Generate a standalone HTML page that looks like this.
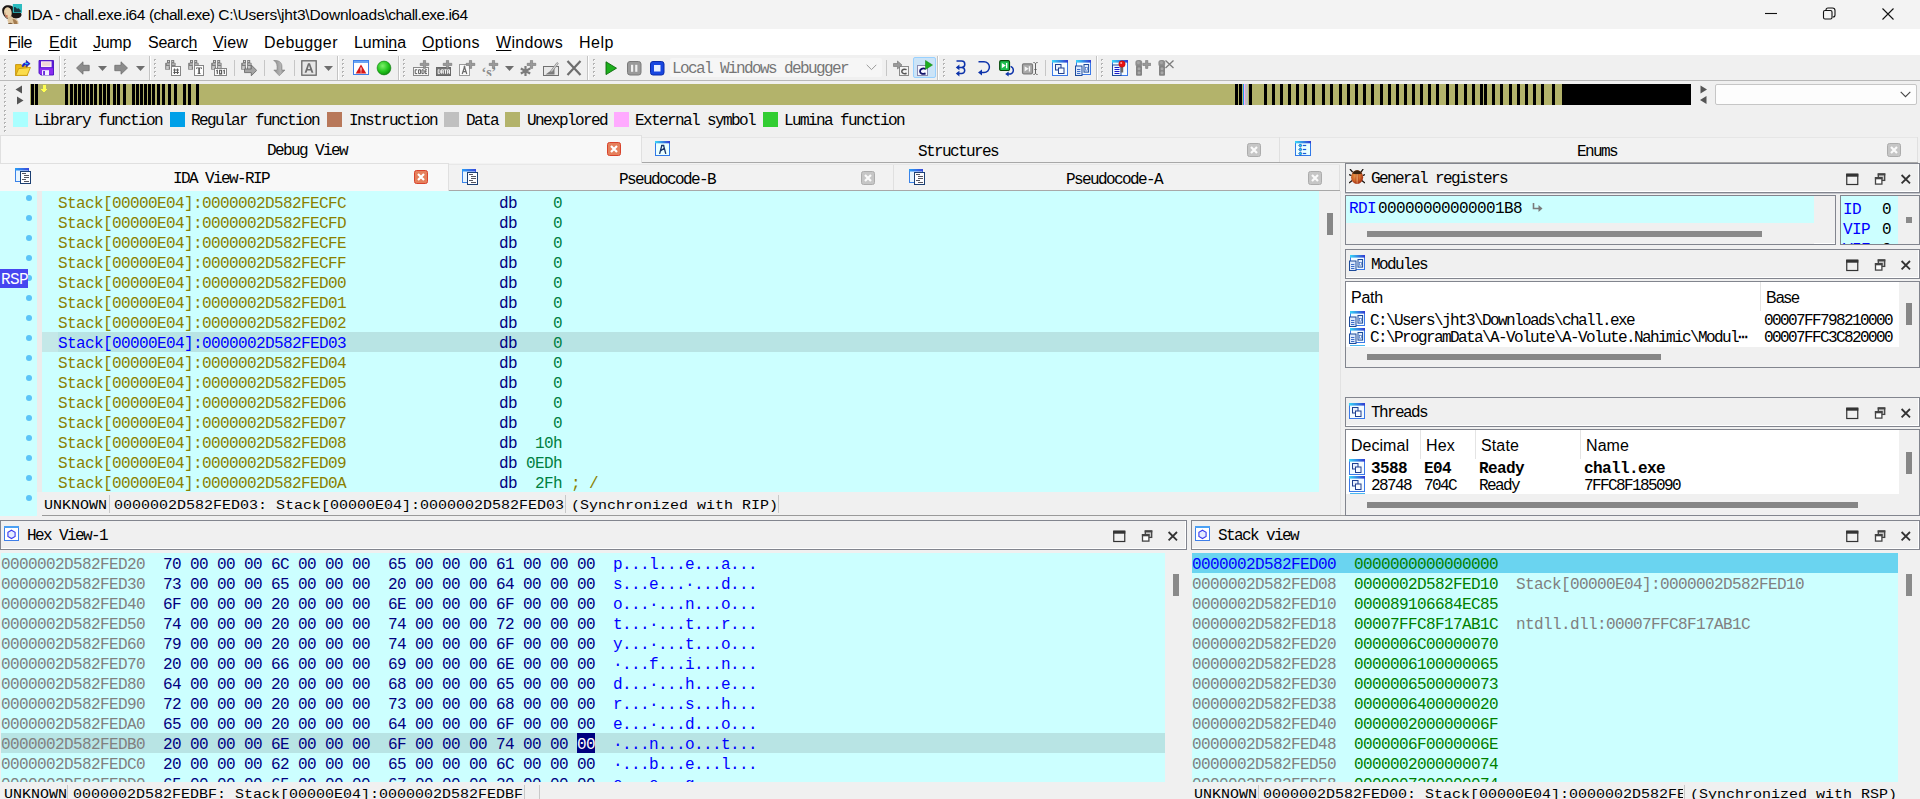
<!DOCTYPE html>
<html><head><meta charset="utf-8"><title>IDA</title>
<style>
html,body{margin:0;padding:0;background:#f0f0f0;}
#r{position:relative;width:1920px;height:799px;overflow:hidden;background:#f0f0f0;}
#r div,#r svg{position:absolute;white-space:pre;}
u{text-decoration-thickness:1px;text-underline-offset:2px;}
.ui8{font-family:'Liberation Mono',monospace;font-size:16px;letter-spacing:-1.6px;line-height:16px;}
.ui8b{font-family:'Liberation Mono',monospace;font-size:16px;letter-spacing:-0.6px;line-height:16px;font-weight:bold;}
.c9{font-family:'Liberation Mono',monospace;font-size:16px;letter-spacing:-0.6px;line-height:20px;}
.st9{font-family:'Liberation Mono',monospace;font-size:12.5px;line-height:16px;transform:scaleX(1.1998);transform-origin:0 0;}
.title{font-family:'Liberation Sans',sans-serif;font-size:15.5px;line-height:18px;}
.menu{font-family:'Liberation Sans',sans-serif;font-size:16px;line-height:18px;}
.hdr{font-family:'Liberation Sans',sans-serif;font-size:16px;line-height:18px;}
</style></head>
<body><div id="r">
<div style="left:0px;top:0px;width:1920px;height:29px;background:#f3f3f3;"></div>
<div style="left:0px;top:29px;width:1920px;height:26px;background:#ffffff;"></div>
<div style="left:0px;top:55px;width:1920px;height:744px;background:#f0f0f0;"></div>
<svg style="left:0px;top:0px" width="26" height="28" viewBox="0 0 26 28">
<path d="M2.200 10.500c0-3.500 3-5.500 6.500-5.200 2.500 .2 4.500 1 5.500 3l5 3c2.500 1.500 3 4 1.500 5.500-1 1.300-3 1.700-5 1.700l-4.500-.5-4 1c-3-2-5-5-5-8.500z" fill="#1b1614"/>
<ellipse cx="7.900" cy="12.600" rx="3.800" ry="5.400" fill="#ead2ac" transform="rotate(-10 7.900 12.600)"/>
<path d="M4.600 12.500c0 3 1 5 2.600 6l1.600-.5c-2-1-3.200-3-3.200-5.500z" fill="#c89a78"/>
<path d="M5.600 15.600q1 .8 2 .2" stroke="#b8402a" stroke-width="1.100" fill="none"/>
<path d="M7.800 17.800l3.700-1.600 2 1.800 3 1 1.800 2.500 .2 2.500h-9.700l-1.300-3.500z" fill="#dfc6a0"/>
<path d="M12.500 19l2.500 .6 2 2 .5 2.400h-3.500z" fill="#a47c50"/>
<path d="M8 23.200l2.500-.5 2 .7v.6h-4.200z" fill="#7a5a3a"/>
<rect x="12.800" y="4" width="9.200" height="8.800" fill="#2cbcc0"/><path d="M14 12v-5l1.600 .2 1.400 1.600 1.500-.6 2.300 2.300v1.500z" fill="#193a42"/>
</svg>
<div class="title" style="left:27.5px;top:5.5px;color:#000;letter-spacing:-0.387px;">IDA - chall.exe.i64 </div>
<div class="title" style="left:149px;top:5.5px;color:#000;letter-spacing:-0.551px;">(chall.exe) </div>
<div class="title" style="left:218.2px;top:5.5px;color:#000;letter-spacing:-0.186px;">C:\Users\jht3\Downloads</div>
<div class="title" style="left:384.5px;top:5.5px;color:#000;letter-spacing:-0.535px;">\chall.exe.i64</div>
<svg style="left:1760px;top:4px" width="140" height="22" viewBox="0 0 140 22" fill="none" stroke="#111" stroke-width="1.1"><path d="M5 9.5h12"/><rect x="63.5" y="6.5" width="8.5" height="8.5" rx="1.5"/><path d="M66 6.3 v-0.3 a2 2 0 0 1 2 -2 h4.5 a2.5 2.5 0 0 1 2.5 2.5 v4.5 a2 2 0 0 1 -2 2 h-0.3"/><path d="M122.5 4.5l11 11M133.5 4.5l-11 11"/></svg>
<div class="menu" style="left:8px;top:34px;color:#000;letter-spacing:-0.445px;"><u>F</u>ile</div>
<div class="menu" style="left:49px;top:34px;color:#000;letter-spacing:0.105px;"><u>E</u>dit</div>
<div class="menu" style="left:93px;top:34px;color:#000;letter-spacing:-0.281px;"><u>J</u>ump</div>
<div class="menu" style="left:148px;top:34px;color:#000;letter-spacing:-0.284px;">Searc<u>h</u></div>
<div class="menu" style="left:213px;top:34px;color:#000;letter-spacing:0.152px;"><u>V</u>iew</div>
<div class="menu" style="left:264px;top:34px;color:#000;letter-spacing:0.465px;">Deb<u>u</u>gger</div>
<div class="menu" style="left:354px;top:34px;color:#000;letter-spacing:-0.081px;">Lumi<u>n</u>a</div>
<div class="menu" style="left:422px;top:34px;color:#000;letter-spacing:0.408px;"><u>O</u>ptions</div>
<div class="menu" style="left:496px;top:34px;color:#000;letter-spacing:0.299px;"><u>W</u>indows</div>
<div class="menu" style="left:579px;top:34px;color:#000;letter-spacing:0.523px;">Help</div>
<div style="left:0px;top:80px;width:1920px;height:1px;background:#b9b9b9;"></div>
<div style="left:4px;top:59px;width:2px;height:2px;background:#b4b4b4;"></div>
<div style="left:5px;top:60px;width:1px;height:1px;background:#ffffff;"></div>
<div style="left:4px;top:63px;width:2px;height:2px;background:#b4b4b4;"></div>
<div style="left:5px;top:64px;width:1px;height:1px;background:#ffffff;"></div>
<div style="left:4px;top:67px;width:2px;height:2px;background:#b4b4b4;"></div>
<div style="left:5px;top:68px;width:1px;height:1px;background:#ffffff;"></div>
<div style="left:4px;top:71px;width:2px;height:2px;background:#b4b4b4;"></div>
<div style="left:5px;top:72px;width:1px;height:1px;background:#ffffff;"></div>
<div style="left:4px;top:75px;width:2px;height:2px;background:#b4b4b4;"></div>
<div style="left:5px;top:76px;width:1px;height:1px;background:#ffffff;"></div>
<div style="left:64px;top:59px;width:2px;height:2px;background:#b4b4b4;"></div>
<div style="left:65px;top:60px;width:1px;height:1px;background:#ffffff;"></div>
<div style="left:64px;top:63px;width:2px;height:2px;background:#b4b4b4;"></div>
<div style="left:65px;top:64px;width:1px;height:1px;background:#ffffff;"></div>
<div style="left:64px;top:67px;width:2px;height:2px;background:#b4b4b4;"></div>
<div style="left:65px;top:68px;width:1px;height:1px;background:#ffffff;"></div>
<div style="left:64px;top:71px;width:2px;height:2px;background:#b4b4b4;"></div>
<div style="left:65px;top:72px;width:1px;height:1px;background:#ffffff;"></div>
<div style="left:64px;top:75px;width:2px;height:2px;background:#b4b4b4;"></div>
<div style="left:65px;top:76px;width:1px;height:1px;background:#ffffff;"></div>
<div style="left:154px;top:59px;width:2px;height:2px;background:#b4b4b4;"></div>
<div style="left:155px;top:60px;width:1px;height:1px;background:#ffffff;"></div>
<div style="left:154px;top:63px;width:2px;height:2px;background:#b4b4b4;"></div>
<div style="left:155px;top:64px;width:1px;height:1px;background:#ffffff;"></div>
<div style="left:154px;top:67px;width:2px;height:2px;background:#b4b4b4;"></div>
<div style="left:155px;top:68px;width:1px;height:1px;background:#ffffff;"></div>
<div style="left:154px;top:71px;width:2px;height:2px;background:#b4b4b4;"></div>
<div style="left:155px;top:72px;width:1px;height:1px;background:#ffffff;"></div>
<div style="left:154px;top:75px;width:2px;height:2px;background:#b4b4b4;"></div>
<div style="left:155px;top:76px;width:1px;height:1px;background:#ffffff;"></div>
<div style="left:342px;top:59px;width:2px;height:2px;background:#b4b4b4;"></div>
<div style="left:343px;top:60px;width:1px;height:1px;background:#ffffff;"></div>
<div style="left:342px;top:63px;width:2px;height:2px;background:#b4b4b4;"></div>
<div style="left:343px;top:64px;width:1px;height:1px;background:#ffffff;"></div>
<div style="left:342px;top:67px;width:2px;height:2px;background:#b4b4b4;"></div>
<div style="left:343px;top:68px;width:1px;height:1px;background:#ffffff;"></div>
<div style="left:342px;top:71px;width:2px;height:2px;background:#b4b4b4;"></div>
<div style="left:343px;top:72px;width:1px;height:1px;background:#ffffff;"></div>
<div style="left:342px;top:75px;width:2px;height:2px;background:#b4b4b4;"></div>
<div style="left:343px;top:76px;width:1px;height:1px;background:#ffffff;"></div>
<div style="left:403px;top:59px;width:2px;height:2px;background:#b4b4b4;"></div>
<div style="left:404px;top:60px;width:1px;height:1px;background:#ffffff;"></div>
<div style="left:403px;top:63px;width:2px;height:2px;background:#b4b4b4;"></div>
<div style="left:404px;top:64px;width:1px;height:1px;background:#ffffff;"></div>
<div style="left:403px;top:67px;width:2px;height:2px;background:#b4b4b4;"></div>
<div style="left:404px;top:68px;width:1px;height:1px;background:#ffffff;"></div>
<div style="left:403px;top:71px;width:2px;height:2px;background:#b4b4b4;"></div>
<div style="left:404px;top:72px;width:1px;height:1px;background:#ffffff;"></div>
<div style="left:403px;top:75px;width:2px;height:2px;background:#b4b4b4;"></div>
<div style="left:404px;top:76px;width:1px;height:1px;background:#ffffff;"></div>
<div style="left:593px;top:59px;width:2px;height:2px;background:#b4b4b4;"></div>
<div style="left:594px;top:60px;width:1px;height:1px;background:#ffffff;"></div>
<div style="left:593px;top:63px;width:2px;height:2px;background:#b4b4b4;"></div>
<div style="left:594px;top:64px;width:1px;height:1px;background:#ffffff;"></div>
<div style="left:593px;top:67px;width:2px;height:2px;background:#b4b4b4;"></div>
<div style="left:594px;top:68px;width:1px;height:1px;background:#ffffff;"></div>
<div style="left:593px;top:71px;width:2px;height:2px;background:#b4b4b4;"></div>
<div style="left:594px;top:72px;width:1px;height:1px;background:#ffffff;"></div>
<div style="left:593px;top:75px;width:2px;height:2px;background:#b4b4b4;"></div>
<div style="left:594px;top:76px;width:1px;height:1px;background:#ffffff;"></div>
<div style="left:943px;top:59px;width:2px;height:2px;background:#b4b4b4;"></div>
<div style="left:944px;top:60px;width:1px;height:1px;background:#ffffff;"></div>
<div style="left:943px;top:63px;width:2px;height:2px;background:#b4b4b4;"></div>
<div style="left:944px;top:64px;width:1px;height:1px;background:#ffffff;"></div>
<div style="left:943px;top:67px;width:2px;height:2px;background:#b4b4b4;"></div>
<div style="left:944px;top:68px;width:1px;height:1px;background:#ffffff;"></div>
<div style="left:943px;top:71px;width:2px;height:2px;background:#b4b4b4;"></div>
<div style="left:944px;top:72px;width:1px;height:1px;background:#ffffff;"></div>
<div style="left:943px;top:75px;width:2px;height:2px;background:#b4b4b4;"></div>
<div style="left:944px;top:76px;width:1px;height:1px;background:#ffffff;"></div>
<div style="left:1101px;top:59px;width:2px;height:2px;background:#b4b4b4;"></div>
<div style="left:1102px;top:60px;width:1px;height:1px;background:#ffffff;"></div>
<div style="left:1101px;top:63px;width:2px;height:2px;background:#b4b4b4;"></div>
<div style="left:1102px;top:64px;width:1px;height:1px;background:#ffffff;"></div>
<div style="left:1101px;top:67px;width:2px;height:2px;background:#b4b4b4;"></div>
<div style="left:1102px;top:68px;width:1px;height:1px;background:#ffffff;"></div>
<div style="left:1101px;top:71px;width:2px;height:2px;background:#b4b4b4;"></div>
<div style="left:1102px;top:72px;width:1px;height:1px;background:#ffffff;"></div>
<div style="left:1101px;top:75px;width:2px;height:2px;background:#b4b4b4;"></div>
<div style="left:1102px;top:76px;width:1px;height:1px;background:#ffffff;"></div>
<div style="left:59px;top:56px;width:1px;height:24px;background:#c4c4c4;"></div>
<div style="left:60px;top:56px;width:1px;height:24px;background:#ffffff;"></div>
<div style="left:149px;top:56px;width:1px;height:24px;background:#c4c4c4;"></div>
<div style="left:150px;top:56px;width:1px;height:24px;background:#ffffff;"></div>
<div style="left:337px;top:56px;width:1px;height:24px;background:#c4c4c4;"></div>
<div style="left:338px;top:56px;width:1px;height:24px;background:#ffffff;"></div>
<div style="left:398px;top:56px;width:1px;height:24px;background:#c4c4c4;"></div>
<div style="left:399px;top:56px;width:1px;height:24px;background:#ffffff;"></div>
<div style="left:587px;top:56px;width:1px;height:24px;background:#c4c4c4;"></div>
<div style="left:588px;top:56px;width:1px;height:24px;background:#ffffff;"></div>
<div style="left:937px;top:56px;width:1px;height:24px;background:#c4c4c4;"></div>
<div style="left:938px;top:56px;width:1px;height:24px;background:#ffffff;"></div>
<div style="left:1096px;top:56px;width:1px;height:24px;background:#c4c4c4;"></div>
<div style="left:1097px;top:56px;width:1px;height:24px;background:#ffffff;"></div>
<div style="left:234px;top:60px;width:1px;height:16px;background:#c6c6c6;"></div>
<div style="left:264px;top:60px;width:1px;height:16px;background:#c6c6c6;"></div>
<div style="left:294px;top:60px;width:1px;height:16px;background:#c6c6c6;"></div>
<div style="left:886px;top:60px;width:1px;height:16px;background:#c6c6c6;"></div>
<div style="left:1045px;top:60px;width:1px;height:16px;background:#c6c6c6;"></div>
<svg style="left:15px;top:60px" width="16" height="16" viewBox="0 0 16 16"><path d="M.600 4.600h5.600l1 1.400h5v9.600H.600z" fill="#eebc18" stroke="#c49208" stroke-width=".900"/><path d="M3.600 8.600l11.800-1.200-3.200 8H.800z" fill="#fbdc4c" stroke="#c89a10" stroke-width=".900"/><path d="M7 6.600c.2-2.600 1.600-3.800 4.200-3.900V.300l4 3.400-4 3.400V4.900c-1.600 0-2.500.600-3 1.800z" fill="#1a22d8" stroke="#1010a8" stroke-width=".400"/><path d="M10 3.700h3.200" stroke="#30e0f8" stroke-width="1"/></svg>
<svg style="left:38px;top:60px" width="16" height="16" viewBox="0 0 16 16"><path d="M1 .500h14.500v14.500H2.800L1 13.200z" fill="#8a2cf0" stroke="#4610c0" stroke-width=".900"/><rect x="1.500" y="1" width="13.500" height="7.200" fill="#5a18d8"/><rect x="3" y="1.300" width="10.600" height="5.800" fill="#fbeef0"/><rect x="4.200" y="2.200" width="8.200" height="3.600" fill="#f0d4d8"/><rect x="4" y="10.200" width="7" height="5" fill="#f4f2ff"/><rect x="5.200" y="11" width="1.700" height="4" fill="#5a18d8"/></svg>
<svg style="left:76px;top:61px" width="14" height="14" viewBox="0 0 14 14"><path d="M0.5 7L7 0.8V4.3h6.2v5.4H7v3.5z" fill="#8c8c8c" stroke="#6e6e6e" stroke-width=".8"/></svg>
<svg style="left:98px;top:66px" width="9" height="5" viewBox="0 0 9 5"><path d="M0 0h9l-4.5 5z" fill="#6e6e6e"/></svg>
<svg style="left:114px;top:61px" width="14" height="14" viewBox="0 0 14 14"><path d="M13.5 7L7 0.8V4.3H0.8v5.4H7v3.5z" fill="#8c8c8c" stroke="#6e6e6e" stroke-width=".8"/></svg>
<svg style="left:136px;top:66px" width="9" height="5" viewBox="0 0 9 5"><path d="M0 0h9l-4.5 5z" fill="#6e6e6e"/></svg>
<svg style="left:165px;top:60px" width="16" height="16" viewBox="0 0 16 16"><rect x="2" y="0" width="3" height="3.200" fill="#7c7c7c"/><rect x="6.200" y="0" width="3" height="3.200" fill="#7c7c7c"/><rect x="3" y=".900" width="1" height="1.200" fill="#d8d8d8"/><rect x="7.200" y=".900" width="1" height="1.200" fill="#d8d8d8"/><rect x=".200" y="2.800" width="4.800" height="7" rx=".600" fill="#7e7e7e"/><rect x="6" y="2.800" width="4.600" height="7" rx=".600" fill="#7e7e7e"/><rect x="1.800" y="3.600" width="3" height="1" fill="#d4d4d4"/><rect x="6.800" y="3.600" width="3" height="1" fill="#d4d4d4"/><rect x="1.200" y="6" width="2.600" height="3.200" fill="#c8c8c8"/><rect x="7" y="6" width="2.600" height="3.200" fill="#c8c8c8"/><rect x="4.800" y="5.500" width="1.400" height="1.400" fill="#f4f4f4"/><rect x="6.500" y="6.500" width="9" height="9" fill="#fdfdfd" stroke="#858585"/><path d="M9.500 8.500v5.500M12.500 8.500v5.500M8.300 10h5.600M8.300 12.500h5.600" stroke="#5a5a5a" stroke-width="1.100" fill="none"/></svg>
<svg style="left:188px;top:60px" width="16" height="16" viewBox="0 0 16 16"><rect x="2" y="0" width="3" height="3.200" fill="#7c7c7c"/><rect x="6.200" y="0" width="3" height="3.200" fill="#7c7c7c"/><rect x="3" y=".900" width="1" height="1.200" fill="#d8d8d8"/><rect x="7.200" y=".900" width="1" height="1.200" fill="#d8d8d8"/><rect x=".200" y="2.800" width="4.800" height="7" rx=".600" fill="#7e7e7e"/><rect x="6" y="2.800" width="4.600" height="7" rx=".600" fill="#7e7e7e"/><rect x="1.800" y="3.600" width="3" height="1" fill="#d4d4d4"/><rect x="6.800" y="3.600" width="3" height="1" fill="#d4d4d4"/><rect x="1.200" y="6" width="2.600" height="3.200" fill="#c8c8c8"/><rect x="7" y="6" width="2.600" height="3.200" fill="#c8c8c8"/><rect x="4.800" y="5.500" width="1.400" height="1.400" fill="#f4f4f4"/><rect x="6.500" y="5.500" width="9" height="10" fill="#fdfdfd" stroke="#858585"/><path d="M8.200 7.500h5.800v1.500h-.6l-.3-.7h-1.200v5l.8.300v.500h-3.200v-.500l.8-.300v-5h-1.200l-.3.700h-.6z" fill="#555"/></svg>
<svg style="left:211px;top:60px" width="16" height="16" viewBox="0 0 16 16"><rect x="2" y="0" width="3" height="3.200" fill="#7c7c7c"/><rect x="6.200" y="0" width="3" height="3.200" fill="#7c7c7c"/><rect x="3" y=".900" width="1" height="1.200" fill="#d8d8d8"/><rect x="7.200" y=".900" width="1" height="1.200" fill="#d8d8d8"/><rect x=".200" y="2.800" width="4.800" height="7" rx=".600" fill="#7e7e7e"/><rect x="6" y="2.800" width="4.600" height="7" rx=".600" fill="#7e7e7e"/><rect x="1.800" y="3.600" width="3" height="1" fill="#d4d4d4"/><rect x="6.800" y="3.600" width="3" height="1" fill="#d4d4d4"/><rect x="1.200" y="6" width="2.600" height="3.200" fill="#c8c8c8"/><rect x="7" y="6" width="2.600" height="3.200" fill="#c8c8c8"/><rect x="4.800" y="5.500" width="1.400" height="1.400" fill="#f4f4f4"/><rect x="3.500" y="8.500" width="12" height="7" fill="#fdfdfd" stroke="#858585"/><path d="M5.300 10.800l1-.5v3.700M8.600 10.300h2v3.600h-2zM12.300 10.800l1-.5v3.700" stroke="#555" stroke-width="1.100" fill="none"/></svg>
<svg style="left:241px;top:60px" width="16" height="16" viewBox="0 0 16 16"><rect x="2" y="0" width="3" height="3.200" fill="#7c7c7c"/><rect x="6.200" y="0" width="3" height="3.200" fill="#7c7c7c"/><rect x="3" y=".900" width="1" height="1.200" fill="#d8d8d8"/><rect x="7.200" y=".900" width="1" height="1.200" fill="#d8d8d8"/><rect x=".200" y="2.800" width="4.800" height="7" rx=".600" fill="#7e7e7e"/><rect x="6" y="2.800" width="4.600" height="7" rx=".600" fill="#7e7e7e"/><rect x="1.800" y="3.600" width="3" height="1" fill="#d4d4d4"/><rect x="6.800" y="3.600" width="3" height="1" fill="#d4d4d4"/><rect x="1.200" y="6" width="2.600" height="3.200" fill="#c8c8c8"/><rect x="7" y="6" width="2.600" height="3.200" fill="#c8c8c8"/><rect x="4.800" y="5.500" width="1.400" height="1.400" fill="#f4f4f4"/><path d="M3.500 9h6.800V5l5.400 5.400-5.400 5.400v-3.200H3.500z" fill="#a4a4a4" stroke="#6c6c6c" stroke-width=".900"/></svg>
<svg style="left:272px;top:60px" width="14" height="16" viewBox="0 0 14 16"><defs><linearGradient id="dg" x1="0" x2="1"><stop offset="0" stop-color="#8a8a8a"/><stop offset=".6" stop-color="#b4b4b4"/><stop offset="1" stop-color="#808080"/></linearGradient></defs><path d="M1.500 .200c4.500 0 8.500 1.500 8.500 6.300v3.500h3l-5.700 5.800L1.800 10h3.200V6.500c0-3-1.500-5-3.500-6.300z" fill="url(#dg)" stroke="#787878" stroke-width=".500"/></svg>
<svg style="left:301px;top:60px" width="16" height="16" viewBox="0 0 16 16"><rect x=".8" y=".8" width="14.4" height="14.4" fill="#e6e6e6" stroke="#666" stroke-width="1.300"/><path d="M3.6 12.8L7 3.2h2l3.4 9.6h-1.9l-.8-2.4H6.3l-.8 2.4zM6.8 8.9h2.4L8 5.2z" fill="#6e6e6e"/></svg>
<svg style="left:324px;top:66px" width="9" height="5" viewBox="0 0 9 5"><path d="M0 0h9l-4.5 5z" fill="#6e6e6e"/></svg>
<svg style="left:353px;top:60px" width="16" height="16" viewBox="0 0 16 16"><rect x=".5" y=".5" width="15" height="14" fill="#fff" stroke="#3f7fe8"/><rect x="1" y="1" width="14" height="2" fill="#6aa6f4"/><path d="M8 4.5l5.3 9H2.7z" fill="#d81818"/><path d="M7.5 7.5h1v3.3h-1zM7.5 11.5h1v1h-1z" fill="#fff"/></svg>
<svg style="left:376px;top:60px" width="16" height="16" viewBox="0 0 16 16"><defs><radialGradient id="gg" cx=".4" cy=".35" r=".7"><stop offset="0" stop-color="#7df06a"/><stop offset=".6" stop-color="#22c41c"/><stop offset="1" stop-color="#0c8a0c"/></radialGradient></defs><circle cx="8" cy="8" r="6.900" fill="url(#gg)" stroke="#0a7a0a" stroke-width=".6"/></svg>
<svg style="left:413px;top:60px" width="17" height="16" viewBox="0 0 17 16"><rect x=".5" y="7.500" width="15" height="8" fill="#fafafa" stroke="#8a8a8a"/><path d="M4.200 9.800H2.200v3.800h2M5.600 9.800h2v3.800h-2zM9 9.800v3.800h1.200l.8-.8v-2.200l-.8-.8zM14 9.800h-1.900v3.800H14M12.100 11.700h1.500" stroke="#5c5c5c" stroke-width="1" fill="none"/><path d="M10.400 .400h2.200v2.900h3.200v2.200h-3.200v2.900h-2.200V5.500H7.200V3.300h3.200z" fill="#9a9a9a" stroke="#747474" stroke-width=".600"/></svg>
<svg style="left:436px;top:60px" width="17" height="16" viewBox="0 0 17 16"><rect x=".5" y="7.500" width="14" height="8" fill="#747474" stroke="#686868"/><path d="M2.200 9.800v3.800h1.200l.8-.8v-2.200l-.8-.8zM5.400 13.800v-4h1.900v4M5.400 12h1.900M8.300 9.800h2.400M9.500 9.800v4M11.600 13.800v-4h1.900v4M11.600 12h1.900" stroke="#f4f4f4" stroke-width="1" fill="none"/><path d="M10.400 .400h2.200v2.900h3.200v2.200h-3.200v2.900h-2.200V5.500H7.200V3.300h3.200z" fill="#9a9a9a" stroke="#747474" stroke-width=".600"/></svg>
<svg style="left:459px;top:60px" width="17" height="16" viewBox="0 0 17 16"><rect x=".5" y="4.500" width="10" height="11" fill="#fafafa" stroke="#9a9a9a"/><path d="M3.200 14l2.300-7 2.300 7M4 11.600h3M4.600 6.800h1.800" stroke="#6a6a6a" stroke-width="1.200" fill="none"/><path d="M10.400 .400h2.200v2.900h3.200v2.200h-3.200v2.900h-2.200V5.500H7.200V3.300h3.200z" fill="#9a9a9a" stroke="#747474" stroke-width=".600"/></svg>
<svg style="left:482px;top:60px" width="17" height="16" viewBox="0 0 17 16"><text x="-.5" y="16.500" font-family="Liberation Serif" font-weight="bold" font-size="14" fill="#8c8c8c">‘s’</text><path d="M10.400 .400h2.200v2.900h3.200v2.200h-3.200v2.900h-2.200V5.500H7.200V3.300h3.200z" fill="#9a9a9a" stroke="#747474" stroke-width=".600"/></svg>
<svg style="left:505px;top:66px" width="9" height="5" viewBox="0 0 9 5"><path d="M0 0h9l-4.5 5z" fill="#6e6e6e"/></svg>
<svg style="left:520px;top:60px" width="17" height="16" viewBox="0 0 17 16"><path d="M5.500 6v10M.8 8.500l9.400 5M.8 13.500l9.400-5" stroke="#7c7c7c" stroke-width="2.200" fill="none"/><path d="M10.400 .400h2.200v2.900h3.200v2.200h-3.200v2.900h-2.200V5.500H7.200V3.300h3.200z" fill="#9a9a9a" stroke="#747474" stroke-width=".600"/></svg>
<svg style="left:543px;top:60px" width="16" height="16" viewBox="0 0 16 16"><rect x=".5" y="6.5" width="15" height="9" fill="#e8e8e8" stroke="#707070"/><path d="M2.5 14.5l9-6.5v6.5z" fill="#7a7a7a"/><path d="M8 10.5l6-8 1.3 1-6 8-2 1z" fill="#d8d8d8" stroke="#808080" stroke-width=".7"/></svg>
<svg style="left:566px;top:60px" width="16" height="16" viewBox="0 0 16 16"><path d="M1.5 1l13 14M14.5 1l-13 14" stroke="#6e6e6e" stroke-width="2.2" fill="none"/></svg>
<svg style="left:605px;top:61px" width="13" height="15" viewBox="0 0 13 15"><path d="M1 .8L11.5 7.2 1 13.6z" fill="#1daf1d" stroke="#0a6a0a" stroke-width=".9"/></svg>
<svg style="left:627px;top:61px" width="15" height="15" viewBox="0 0 15 15"><rect x=".5" y=".5" width="13.5" height="13.5" rx="2.5" fill="#9a9a9a" stroke="#7a7a7a"/><rect x="4" y="3.8" width="2.2" height="7" fill="#f0f0f0"/><rect x="8.2" y="3.8" width="2.2" height="7" fill="#f0f0f0"/></svg>
<svg style="left:650px;top:61px" width="15" height="15" viewBox="0 0 15 15"><rect x=".5" y=".5" width="13.5" height="13.5" rx="2.5" fill="#1746e0" stroke="#0a2aa8"/><rect x="4" y="4" width="6.5" height="6.5" fill="#e6eeff"/></svg>
<div style="left:670px;top:58px;width:212px;height:19px;background:#f6f6f6;border-radius:2px;"></div>
<div class="ui8" style="left:672px;top:61px;color:#767676;">Local Windows debugger</div>
<svg style="left:866px;top:64px" width="11" height="7" viewBox="0 0 11 7"><path d="M.7.8l4.8 4.8L10.3.8" fill="none" stroke="#9a9a9a" stroke-width="1"/></svg>
<svg style="left:893px;top:60px" width="16" height="16" viewBox="0 0 16 16"><rect x="6.5" y="6.5" width="9" height="9" fill="#f4f4f4" stroke="#8a8a8a"/><path d="M13.6 9.6c-2.6-1.2-4.8.2-4.8 1.8s2.2 3 4.8 1.8" fill="none" stroke="#555" stroke-width="1.5"/><path d="M.5 3.5h4V1l4.5 4-4.5 4V6.5h-4z" fill="#9a9a9a" stroke="#6e6e6e" stroke-width=".6"/></svg>
<div style="left:913px;top:57px;width:23px;height:21px;background:#cce4f7;border:1px solid #99d1ff;box-sizing:border-box;border-radius:2px;"></div>
<svg style="left:917px;top:60px" width="16" height="16" viewBox="0 0 16 16"><rect x=".5" y="5.5" width="10" height="10" fill="#f8f8ff" stroke="#8a8ab0"/><path d="M8.6 9c-3-1.4-5.6.2-5.6 2.2s2.6 3.6 5.6 2.2" fill="none" stroke="#10106a" stroke-width="1.8"/><path d="M8.5.5l7 4.5-7 4.5z" fill="#1daf1d" stroke="#0a7a0a" stroke-width=".5"/></svg>
<svg style="left:953px;top:60px" width="16" height="17" viewBox="0 0 16 17"><path d="M3.500 1H8.600a3.200 3.200 0 0 1 0 6.400H4.200M8.600 7.400a3.100 3.100 0 0 1 0 6.200H4.200" fill="none" stroke="#0c32aa" stroke-width="1.500"/><path d="M6.400 4.600L2.800 7.400l3.600 2.800zM6.400 10.800l-3.600 2.800 3.600 2.800z" fill="#0c32aa"/></svg>
<svg style="left:977px;top:60px" width="16" height="17" viewBox="0 0 16 17"><path d="M1.500 1.700H7a5.400 5.400 0 0 1 0 10.800H3" fill="none" stroke="#0c32aa" stroke-width="1.500"/><path d="M5 9.500L1 12.500l4 3z" fill="#0c32aa"/></svg>
<svg style="left:998px;top:60px" width="18" height="17" viewBox="0 0 18 17"><rect x="1.700" y=".700" width="9.800" height="9.800" rx="1.200" fill="#1fbf4f" stroke="#064a0a" stroke-width="1.200"/><path d="M3.800 3l4 2.600-4 2.600zM8 3h1.300v5.200H8z" fill="#fff"/><path d="M12.600 6.400a4 4 0 0 1 0 7.600H9.500" fill="none" stroke="#0c32aa" stroke-width="1.400"/><path d="M10.600 11.400L7.200 14l3.400 2.600z" fill="#0c32aa"/></svg>
<svg style="left:1021px;top:62px" width="17" height="15" viewBox="0 0 17 15"><rect x="1.500" y="1.800" width="10" height="10" rx="1.200" fill="#a8a8a8" stroke="#7c7c7c" stroke-width="1.200"/><path d="M3.600 4.200l4 2.600-4 2.600zM7.800 4.200h1.300v5.200H7.800z" fill="#f4f4f4"/><path d="M12.400 .500q1.500 0 2.100 1q.600-1 2.100-1M12.400 12.500q1.500 0 2.100-1q.600 1 2.100 1M14.500 1.500v10M13.400 7.500h2.200" stroke="#505050" stroke-width=".900" fill="none"/></svg>
<svg style="left:1052px;top:60px" width="16" height="16" viewBox="0 0 16 16"><rect x=".5" y=".5" width="15" height="15" fill="#f4fbff" stroke="#3a78e8"/><rect x="0" y="0" width="16" height="2.600" fill="url(#at)"/><rect x="3.500" y="4.500" width="5.500" height="5.500" fill="#e8f0fc" stroke="#1f3f8f"/><rect x="6.500" y="8" width="5.500" height="5.500" fill="#f8fbff" stroke="#1f3f8f"/></svg>
<svg style="left:1075px;top:60px;overflow:visible" width="16" height="16" viewBox="0 0 16 16"><rect x="1.500" y=".5" width="14" height="14" fill="#f4fbff" stroke="#3a78e8"/><rect x="1" y="0" width="15" height="2.600" fill="url(#at)"/><rect x=".5" y="6" width="6.500" height="9.500" fill="#dce8fb" stroke="#1c4a9a"/><path d="M2 9.500h3.400M2 11.500h3.400M2 13.500h3.400" stroke="#2a5fc0" stroke-width=".900"/><rect x="9" y="4.500" width="4.600" height="7.600" fill="#e4eefc" stroke="#1c4a9a"/><rect x="10.300" y="7.500" width="2" height="2.600" fill="#fff" stroke="#2a5fc0" stroke-width=".600"/></svg>
<svg style="left:1112px;top:60px" width="16" height="16" viewBox="0 0 16 16"><rect x=".5" y=".5" width="15" height="15" fill="#f4fbff" stroke="#3a78e8"/><rect x="0" y="0" width="16" height="2.600" fill="url(#at)"/><rect x=".5" y="5" width="8.500" height="10.500" fill="#f0f6ff" stroke="#1c4a9a"/><path d="M2.500 7.500h5M2.500 9.500h5M2.500 11.500h5M2.500 13.500h5" stroke="#1a1ac8" stroke-width="1"/><rect x="8.600" y="6.500" width="2.600" height="6" fill="#6a6a6a"/><circle cx="10" cy="4" r="3.200" fill="#e81010" stroke="#b00808" stroke-width=".500"/><circle cx="9.200" cy="3" r="1" fill="#ff9c9c"/></svg>
<svg style="left:1135px;top:60px" width="16" height="16" viewBox="0 0 16 16"><rect x=".400" y="0" width="6.800" height="6.600" rx="2.600" fill="#8e8e8e"/><rect x="1" y="5.500" width="6" height="10.300" rx="1" fill="#848484"/><circle cx="4" cy="8.800" r="1.500" fill="#a8a8a8"/><circle cx="4" cy="12.800" r="1.500" fill="#a8a8a8"/><circle cx="3.400" cy="2.600" r="1.600" fill="#a4a4a4"/><path d="M10.600 .400h2.200v2.900h3v2.200h-3v2.900h-2.200V5.500H7.800V3.300h2.800z" fill="#9a9a9a" stroke="#747474" stroke-width=".600"/></svg>
<svg style="left:1158px;top:60px" width="16" height="16" viewBox="0 0 16 16"><rect x=".400" y="0" width="6.800" height="6.600" rx="2.600" fill="#8e8e8e"/><rect x="1" y="5.500" width="6" height="10.300" rx="1" fill="#848484"/><circle cx="4" cy="8.800" r="1.500" fill="#a8a8a8"/><circle cx="4" cy="12.800" r="1.500" fill="#a8a8a8"/><circle cx="3.400" cy="2.600" r="1.600" fill="#a4a4a4"/><path d="M7.500 .500l8 7.500M15.500 .500l-8 7.500" stroke="#7c7c7c" stroke-width="1.300" fill="none"/></svg>
<div style="left:4px;top:85px;width:2px;height:2px;background:#b4b4b4;"></div>
<div style="left:5px;top:86px;width:1px;height:1px;background:#fff;"></div>
<div style="left:4px;top:89px;width:2px;height:2px;background:#b4b4b4;"></div>
<div style="left:5px;top:90px;width:1px;height:1px;background:#fff;"></div>
<div style="left:4px;top:93px;width:2px;height:2px;background:#b4b4b4;"></div>
<div style="left:5px;top:94px;width:1px;height:1px;background:#fff;"></div>
<div style="left:4px;top:97px;width:2px;height:2px;background:#b4b4b4;"></div>
<div style="left:5px;top:98px;width:1px;height:1px;background:#fff;"></div>
<div style="left:4px;top:101px;width:2px;height:2px;background:#b4b4b4;"></div>
<div style="left:5px;top:102px;width:1px;height:1px;background:#fff;"></div>
<div style="left:4px;top:105px;width:2px;height:2px;background:#b4b4b4;"></div>
<div style="left:5px;top:106px;width:1px;height:1px;background:#fff;"></div>
<div style="left:4px;top:110px;width:2px;height:2px;background:#b4b4b4;"></div>
<div style="left:5px;top:111px;width:1px;height:1px;background:#fff;"></div>
<div style="left:4px;top:114px;width:2px;height:2px;background:#b4b4b4;"></div>
<div style="left:5px;top:115px;width:1px;height:1px;background:#fff;"></div>
<div style="left:4px;top:118px;width:2px;height:2px;background:#b4b4b4;"></div>
<div style="left:5px;top:119px;width:1px;height:1px;background:#fff;"></div>
<div style="left:4px;top:122px;width:2px;height:2px;background:#b4b4b4;"></div>
<div style="left:5px;top:123px;width:1px;height:1px;background:#fff;"></div>
<div style="left:4px;top:126px;width:2px;height:2px;background:#b4b4b4;"></div>
<div style="left:5px;top:127px;width:1px;height:1px;background:#fff;"></div>
<div style="left:4px;top:130px;width:2px;height:2px;background:#b4b4b4;"></div>
<div style="left:5px;top:131px;width:1px;height:1px;background:#fff;"></div>
<svg style="left:15px;top:85px" width="9" height="20" viewBox="0 0 9 20"><path d="M7 .5v8L.5 4.5zM2 11.5v8l6.5-4z" fill="#555"/></svg>
<div style="left:30px;top:84px;width:1661px;height:21px;background:#b3b36b;"></div>
<svg style="left:30px;top:84px" width="1661" height="21" viewBox="0 0 1661 21" shape-rendering="crispEdges"><g fill="#000"><rect x="1" y="0" width="3" height="21"/><rect x="5" y="0" width="3" height="21"/><rect x="35" y="0" width="3" height="21"/><rect x="40" y="0" width="3" height="21"/><rect x="44" y="0" width="3" height="21"/><rect x="48" y="0" width="3" height="21"/><rect x="52" y="0" width="3" height="21"/><rect x="56" y="0" width="3" height="21"/><rect x="60" y="0" width="3" height="21"/><rect x="64" y="0" width="3" height="21"/><rect x="69" y="0" width="3" height="21"/><rect x="73" y="0" width="3" height="21"/><rect x="77" y="0" width="3" height="21"/><rect x="83" y="0" width="3" height="21"/><rect x="87" y="0" width="3" height="21"/><rect x="93" y="0" width="3" height="21"/><rect x="102" y="0" width="3" height="21"/><rect x="106" y="0" width="3" height="21"/><rect x="110" y="0" width="3" height="21"/><rect x="114" y="0" width="3" height="21"/><rect x="118" y="0" width="3" height="21"/><rect x="122" y="0" width="3" height="21"/><rect x="127" y="0" width="3" height="21"/><rect x="132" y="0" width="3" height="21"/><rect x="138" y="0" width="3" height="21"/><rect x="144" y="0" width="3" height="21"/><rect x="153" y="0" width="3" height="21"/><rect x="158" y="0" width="3" height="21"/><rect x="166" y="0" width="3" height="21"/><rect x="1205" y="0" width="3" height="21"/><rect x="1209" y="0" width="3" height="21"/><rect x="1219" y="0" width="3" height="21"/><rect x="1234" y="0" width="3" height="21"/><rect x="1242" y="0" width="3" height="21"/><rect x="1250" y="0" width="3" height="21"/><rect x="1258" y="0" width="3" height="21"/><rect x="1266" y="0" width="3" height="21"/><rect x="1274" y="0" width="3" height="21"/><rect x="1282" y="0" width="3" height="21"/><rect x="1292" y="0" width="3" height="21"/><rect x="1300" y="0" width="3" height="21"/><rect x="1309" y="0" width="3" height="21"/><rect x="1317" y="0" width="3" height="21"/><rect x="1325" y="0" width="3" height="21"/><rect x="1333" y="0" width="3" height="21"/><rect x="1341" y="0" width="3" height="21"/><rect x="1350" y="0" width="3" height="21"/><rect x="1358" y="0" width="3" height="21"/><rect x="1366" y="0" width="3" height="21"/><rect x="1374" y="0" width="3" height="21"/><rect x="1382" y="0" width="3" height="21"/><rect x="1390" y="0" width="3" height="21"/><rect x="1398" y="0" width="3" height="21"/><rect x="1406" y="0" width="3" height="21"/><rect x="1416" y="0" width="3" height="21"/><rect x="1425" y="0" width="3" height="21"/><rect x="1434" y="0" width="3" height="21"/><rect x="1442" y="0" width="3" height="21"/><rect x="1450" y="0" width="3" height="21"/><rect x="1454" y="0" width="3" height="21"/><rect x="1462" y="0" width="3" height="21"/><rect x="1470" y="0" width="3" height="21"/><rect x="1479" y="0" width="3" height="21"/><rect x="1487" y="0" width="3" height="21"/><rect x="1495" y="0" width="3" height="21"/><rect x="1503" y="0" width="3" height="21"/><rect x="1511" y="0" width="3" height="21"/><rect x="1522" y="0" width="3" height="21"/><rect x="1532" y="0" width="129" height="21"/></g><rect x="1213" y="0" width="1" height="21" fill="#1e9eee"/><rect x="1214" y="0" width="1" height="21" fill="#ffaaff"/><rect x="1215" y="0" width="3" height="21" fill="#c0c0c0"/><path d="M12.5 1h3v4h2l-3.5 4-3.5-4h2z" fill="#ffff50"/></svg>
<svg style="left:1699px;top:85px" width="9" height="20" viewBox="0 0 9 20"><path d="M1.5 .5v8L8 4.5zM7.5 11v8L1 15z" fill="#555"/></svg>
<div style="left:1715px;top:84px;width:202px;height:21px;background:#fdfdfd;border:1px solid #c6c6c6;box-sizing:border-box;border-radius:2px;"></div>
<svg style="left:1900px;top:91px" width="11" height="7" viewBox="0 0 11 7"><path d="M.7.8l4.8 4.8L10.3.8" fill="none" stroke="#444" stroke-width="1.1"/></svg>
<div style="left:13px;top:112px;width:15px;height:15px;background:#aaffff;"></div>
<div class="ui8" style="left:34px;top:113px;color:#000;">Library function</div>
<div style="left:170px;top:112px;width:15px;height:15px;background:#00a0e8;"></div>
<div class="ui8" style="left:191px;top:113px;color:#000;">Regular function</div>
<div style="left:327px;top:112px;width:15px;height:15px;background:#b8785a;"></div>
<div class="ui8" style="left:349px;top:113px;color:#000;">Instruction</div>
<div style="left:444px;top:112px;width:15px;height:15px;background:#c0c0c0;"></div>
<div class="ui8" style="left:466px;top:113px;color:#000;">Data</div>
<div style="left:505px;top:112px;width:15px;height:15px;background:#b3b36b;"></div>
<div class="ui8" style="left:527px;top:113px;color:#000;">Unexplored</div>
<div style="left:614px;top:112px;width:15px;height:15px;background:#ffaaff;"></div>
<div class="ui8" style="left:635px;top:113px;color:#000;">External symbol</div>
<div style="left:763px;top:112px;width:15px;height:15px;background:#32cd32;"></div>
<div class="ui8" style="left:784px;top:113px;color:#000;">Lumina function</div>
<div style="left:0px;top:137px;width:1918px;height:26px;background:#f2f2f2;"></div>
<div style="left:0px;top:137px;width:1918px;height:1px;background:#e6e6e6;"></div>
<div style="left:0px;top:135px;width:642px;height:28px;background:#f8f8f8;"></div>
<div style="left:0px;top:135px;width:642px;height:1px;background:#e0e0e0;"></div>
<div style="left:641px;top:135px;width:1px;height:28px;background:#e0e0e0;"></div>
<div style="left:0px;top:135px;width:1px;height:28px;background:#e0e0e0;"></div>
<div style="left:642px;top:162px;width:1276px;height:1px;background:#a8a8a8;"></div>
<div style="left:1279px;top:137px;width:1px;height:25px;background:#e0e0e0;"></div>
<div style="left:1917px;top:137px;width:1px;height:25px;background:#e0e0e0;"></div>
<div class="ui8" style="left:267px;top:143px;color:#000;">Debug View</div>
<svg style="left:607px;top:142px" width="14" height="14" viewBox="0 0 14 14"><rect x=".5" y=".5" width="13" height="13" rx="2" fill="#e5805c" stroke="#d8432c"/><path d="M4 4l6 6M10 4l-6 6" stroke="#fff" stroke-width="2.200" fill="none"/></svg>
<svg style="left:655px;top:141px" width="15" height="15" viewBox="0 0 15 15"><defs><linearGradient id="at" x1="0" x2="1"><stop offset="0" stop-color="#38d8f8"/><stop offset="1" stop-color="#3038d0"/></linearGradient></defs><rect x=".5" y=".5" width="14" height="14" fill="#eaffff" stroke="#3078e8"/><rect x="0" y="0" width="15" height="2.300" fill="url(#at)"/><path d="M4.600 12.800L6.800 4.500h1.800l2.200 8.300M6 4.600h3.400M5.800 9.800l3.800-2.800" stroke="#1a3468" stroke-width="1.300" fill="none"/></svg>
<div class="ui8" style="left:918px;top:144px;color:#000;">Structures</div>
<svg style="left:1247px;top:143px" width="14" height="14" viewBox="0 0 14 14"><rect x=".5" y=".5" width="13" height="13" rx="2" fill="#c6c6c6" stroke="#acacac"/><path d="M4 4l6 6M10 4l-6 6" stroke="#fafafa" stroke-width="2.200" fill="none"/></svg>
<svg style="left:1295px;top:141px" width="16" height="15" viewBox="0 0 16 15"><rect x=".5" y=".5" width="15" height="14" fill="#eaffff" stroke="#3078e8"/><rect x="0" y="0" width="16" height="2.300" fill="url(#at)"/><path d="M5.400 2.9l1.600 1.600-1.600 1.600-1.600-1.600z" fill="#10d8f0" stroke="#1838b8" stroke-width=".800"/><rect x="8" y="3.9" width="3.200" height="1.200" fill="#1858d8"/><path d="M5.400 6.9l1.600 1.600-1.600 1.600-1.600-1.600z" fill="#10d8f0" stroke="#1838b8" stroke-width=".800"/><rect x="8" y="7.9" width="3.200" height="1.200" fill="#1858d8"/><path d="M5.400 10.9l1.600 1.600-1.600 1.600-1.600-1.600z" fill="#10d8f0" stroke="#1838b8" stroke-width=".800"/><rect x="8" y="11.9" width="3.200" height="1.200" fill="#1858d8"/></svg>
<div class="ui8" style="left:1577px;top:144px;color:#000;">Enums</div>
<svg style="left:1887px;top:143px" width="14" height="14" viewBox="0 0 14 14"><rect x=".5" y=".5" width="13" height="13" rx="2" fill="#c6c6c6" stroke="#acacac"/><path d="M4 4l6 6M10 4l-6 6" stroke="#fafafa" stroke-width="2.200" fill="none"/></svg>
<div style="left:0px;top:163px;width:1340px;height:28px;background:#f2f2f2;"></div>
<div style="left:0px;top:163px;width:449px;height:28px;background:#f8f8f8;"></div>
<div style="left:448px;top:163px;width:1px;height:28px;background:#e0e0e0;"></div>
<div style="left:0px;top:163px;width:449px;height:1px;background:#e0e0e0;"></div>
<div style="left:449px;top:164px;width:891px;height:1px;background:#e8e8e8;"></div>
<div style="left:449px;top:190px;width:891px;height:1px;background:#a8a8a8;"></div>
<div style="left:893px;top:165px;width:1px;height:25px;background:#e0e0e0;"></div>
<div style="left:1339px;top:165px;width:1px;height:25px;background:#e0e0e0;"></div>
<svg style="left:15px;top:168px" width="17" height="17" viewBox="0 0 17 17"><defs><linearGradient id="vt" x1="0" x2="1"><stop offset="0" stop-color="#2aa0f8"/><stop offset="1" stop-color="#3a48d8"/></linearGradient></defs><rect x=".5" y=".5" width="13" height="13" fill="#e8f5ff" stroke="#3a82e8"/><rect x="0" y="0" width="14" height="2.5" fill="url(#vt)"/><rect x="5.500" y="3.500" width="10" height="12" fill="#fdfdff" stroke="#1c3f72" stroke-width="1"/><path d="M7 5.500h4M9 7.500h5M9 9.500h5M7 11.500h4M9 13.500h5" stroke="#55555f" stroke-width="1"/></svg>
<div class="ui8" style="left:173px;top:171px;color:#000;">IDA View-RIP</div>
<svg style="left:414px;top:170px" width="14" height="14" viewBox="0 0 14 14"><rect x=".5" y=".5" width="13" height="13" rx="2" fill="#e5805c" stroke="#d8432c"/><path d="M4 4l6 6M10 4l-6 6" stroke="#fff" stroke-width="2.200" fill="none"/></svg>
<svg style="left:462px;top:169px" width="17" height="17" viewBox="0 0 17 17"><defs><linearGradient id="vt" x1="0" x2="1"><stop offset="0" stop-color="#2aa0f8"/><stop offset="1" stop-color="#3a48d8"/></linearGradient></defs><rect x=".5" y=".5" width="13" height="13" fill="#e8f5ff" stroke="#3a82e8"/><rect x="0" y="0" width="14" height="2.5" fill="url(#vt)"/><rect x="5.500" y="3.500" width="10" height="12" fill="#fdfdff" stroke="#1c3f72" stroke-width="1"/><path d="M7 5.500h4M9 7.500h5M9 9.500h5M7 11.500h4M9 13.500h5" stroke="#55555f" stroke-width="1"/></svg>
<div class="ui8" style="left:619px;top:172px;color:#000;">Pseudocode-B</div>
<svg style="left:861px;top:171px" width="14" height="14" viewBox="0 0 14 14"><rect x=".5" y=".5" width="13" height="13" rx="2" fill="#c6c6c6" stroke="#acacac"/><path d="M4 4l6 6M10 4l-6 6" stroke="#fafafa" stroke-width="2.200" fill="none"/></svg>
<svg style="left:909px;top:169px" width="17" height="17" viewBox="0 0 17 17"><defs><linearGradient id="vt" x1="0" x2="1"><stop offset="0" stop-color="#2aa0f8"/><stop offset="1" stop-color="#3a48d8"/></linearGradient></defs><rect x=".5" y=".5" width="13" height="13" fill="#e8f5ff" stroke="#3a82e8"/><rect x="0" y="0" width="14" height="2.5" fill="url(#vt)"/><rect x="5.500" y="3.500" width="10" height="12" fill="#fdfdff" stroke="#1c3f72" stroke-width="1"/><path d="M7 5.500h4M9 7.500h5M9 9.500h5M7 11.500h4M9 13.500h5" stroke="#55555f" stroke-width="1"/></svg>
<div class="ui8" style="left:1066px;top:172px;color:#000;">Pseudocode-A</div>
<svg style="left:1308px;top:171px" width="14" height="14" viewBox="0 0 14 14"><rect x=".5" y=".5" width="13" height="13" rx="2" fill="#c6c6c6" stroke="#acacac"/><path d="M4 4l6 6M10 4l-6 6" stroke="#fafafa" stroke-width="2.200" fill="none"/></svg>
<div style="left:0px;top:191px;width:1319px;height:301px;background:#ccffff;"></div>
<div style="left:37px;top:191px;width:5px;height:325px;background:#ececec;"></div>
<div style="left:42px;top:332px;width:1277px;height:20px;background:#b8e4e4;"></div>
<div style="left:42px;top:332px;width:16px;height:20px;background:#c4e8e8;"></div>
<div style="left:26px;top:195px;width:6px;height:6px;background:#5cc4f8;border-radius:3px;"></div>
<div class="c9" style="left:58px;top:194px;color:#8a8000;">Stack[00000E04]:0000002D582FECFC</div>
<div class="c9" style="left:499px;top:194px;color:#000080;">db</div>
<div class="c9" style="left:526px;top:194px;color:#008040;">   0</div>
<div style="left:26px;top:215px;width:6px;height:6px;background:#5cc4f8;border-radius:3px;"></div>
<div class="c9" style="left:58px;top:214px;color:#8a8000;">Stack[00000E04]:0000002D582FECFD</div>
<div class="c9" style="left:499px;top:214px;color:#000080;">db</div>
<div class="c9" style="left:526px;top:214px;color:#008040;">   0</div>
<div style="left:26px;top:235px;width:6px;height:6px;background:#5cc4f8;border-radius:3px;"></div>
<div class="c9" style="left:58px;top:234px;color:#8a8000;">Stack[00000E04]:0000002D582FECFE</div>
<div class="c9" style="left:499px;top:234px;color:#000080;">db</div>
<div class="c9" style="left:526px;top:234px;color:#008040;">   0</div>
<div style="left:26px;top:255px;width:6px;height:6px;background:#5cc4f8;border-radius:3px;"></div>
<div class="c9" style="left:58px;top:254px;color:#8a8000;">Stack[00000E04]:0000002D582FECFF</div>
<div class="c9" style="left:499px;top:254px;color:#000080;">db</div>
<div class="c9" style="left:526px;top:254px;color:#008040;">   0</div>
<div style="left:26px;top:275px;width:6px;height:6px;background:#5cc4f8;border-radius:3px;"></div>
<div class="c9" style="left:58px;top:274px;color:#8a8000;">Stack[00000E04]:0000002D582FED00</div>
<div class="c9" style="left:499px;top:274px;color:#000080;">db</div>
<div class="c9" style="left:526px;top:274px;color:#008040;">   0</div>
<div style="left:26px;top:295px;width:6px;height:6px;background:#5cc4f8;border-radius:3px;"></div>
<div class="c9" style="left:58px;top:294px;color:#8a8000;">Stack[00000E04]:0000002D582FED01</div>
<div class="c9" style="left:499px;top:294px;color:#000080;">db</div>
<div class="c9" style="left:526px;top:294px;color:#008040;">   0</div>
<div style="left:26px;top:315px;width:6px;height:6px;background:#5cc4f8;border-radius:3px;"></div>
<div class="c9" style="left:58px;top:314px;color:#8a8000;">Stack[00000E04]:0000002D582FED02</div>
<div class="c9" style="left:499px;top:314px;color:#000080;">db</div>
<div class="c9" style="left:526px;top:314px;color:#008040;">   0</div>
<div style="left:26px;top:335px;width:6px;height:6px;background:#5cc4f8;border-radius:3px;"></div>
<div class="c9" style="left:58px;top:334px;color:#0000ff;">Stack[00000E04]:0000002D582FED03</div>
<div class="c9" style="left:499px;top:334px;color:#000080;">db</div>
<div class="c9" style="left:526px;top:334px;color:#008040;">   0</div>
<div style="left:26px;top:355px;width:6px;height:6px;background:#5cc4f8;border-radius:3px;"></div>
<div class="c9" style="left:58px;top:354px;color:#8a8000;">Stack[00000E04]:0000002D582FED04</div>
<div class="c9" style="left:499px;top:354px;color:#000080;">db</div>
<div class="c9" style="left:526px;top:354px;color:#008040;">   0</div>
<div style="left:26px;top:375px;width:6px;height:6px;background:#5cc4f8;border-radius:3px;"></div>
<div class="c9" style="left:58px;top:374px;color:#8a8000;">Stack[00000E04]:0000002D582FED05</div>
<div class="c9" style="left:499px;top:374px;color:#000080;">db</div>
<div class="c9" style="left:526px;top:374px;color:#008040;">   0</div>
<div style="left:26px;top:395px;width:6px;height:6px;background:#5cc4f8;border-radius:3px;"></div>
<div class="c9" style="left:58px;top:394px;color:#8a8000;">Stack[00000E04]:0000002D582FED06</div>
<div class="c9" style="left:499px;top:394px;color:#000080;">db</div>
<div class="c9" style="left:526px;top:394px;color:#008040;">   0</div>
<div style="left:26px;top:415px;width:6px;height:6px;background:#5cc4f8;border-radius:3px;"></div>
<div class="c9" style="left:58px;top:414px;color:#8a8000;">Stack[00000E04]:0000002D582FED07</div>
<div class="c9" style="left:499px;top:414px;color:#000080;">db</div>
<div class="c9" style="left:526px;top:414px;color:#008040;">   0</div>
<div style="left:26px;top:435px;width:6px;height:6px;background:#5cc4f8;border-radius:3px;"></div>
<div class="c9" style="left:58px;top:434px;color:#8a8000;">Stack[00000E04]:0000002D582FED08</div>
<div class="c9" style="left:499px;top:434px;color:#000080;">db</div>
<div class="c9" style="left:526px;top:434px;color:#008040;"> 10h</div>
<div style="left:26px;top:455px;width:6px;height:6px;background:#5cc4f8;border-radius:3px;"></div>
<div class="c9" style="left:58px;top:454px;color:#8a8000;">Stack[00000E04]:0000002D582FED09</div>
<div class="c9" style="left:499px;top:454px;color:#000080;">db</div>
<div class="c9" style="left:526px;top:454px;color:#008040;">0EDh</div>
<div style="left:26px;top:475px;width:6px;height:6px;background:#5cc4f8;border-radius:3px;"></div>
<div class="c9" style="left:58px;top:474px;color:#8a8000;">Stack[00000E04]:0000002D582FED0A</div>
<div class="c9" style="left:499px;top:474px;color:#000080;">db</div>
<div class="c9" style="left:526px;top:474px;color:#008040;"> 2Fh</div>
<div class="c9" style="left:571px;top:474px;color:#8a8000;">; /</div>
<div style="left:26px;top:495px;width:6px;height:6px;background:#5cc4f8;border-radius:3px;"></div>
<div style="left:0px;top:269px;width:28px;height:19px;background:#4646f0;"></div>
<div class="c9" style="left:1px;top:270px;color:#fff;">RSP</div>
<div style="left:1327px;top:213px;width:6px;height:22px;background:#868686;"></div>
<div style="left:1340px;top:191px;width:1px;height:325px;background:#e2e2e2;"></div>
<div style="left:0px;top:492px;width:1340px;height:24px;background:#f0f0f0;"></div>
<div style="left:0px;top:492px;width:37px;height:24px;background:#ccffff;"></div>
<div style="left:26px;top:495px;width:6px;height:6px;background:#5cc4f8;border-radius:3px;"></div>
<div class="st9" style="left:44px;top:498px;color:#000;">UNKNOWN</div>
<div style="left:109px;top:495px;width:1px;height:18px;background:#c8c8c8;"></div>
<div class="st9" style="left:114px;top:498px;color:#000;">0000002D582FED03: Stack[00000E04]:0000002D582FED03</div>
<div style="left:565px;top:495px;width:1px;height:18px;background:#c8c8c8;"></div>
<div class="st9" style="left:571px;top:498px;color:#000;">(Synchronized with RIP)</div>
<div style="left:778px;top:495px;width:1px;height:18px;background:#c8c8c8;"></div>
<div style="left:42px;top:515px;width:1303px;height:1px;background:#9a9a9a;"></div>
<div style="left:1345px;top:163px;width:575px;height:30px;background:#f0f0f0;border:1px solid #82858e;box-sizing:border-box;"></div>
<div style="left:1346px;top:191px;width:573px;height:1px;background:#ffffff;"></div>
<div style="left:1918px;top:164px;width:1px;height:28px;background:#ffffff;"></div>
<svg style="left:1349px;top:169px" width="16" height="16" viewBox="0 0 16 16"><defs><radialGradient id="bg" cx=".42" cy=".4" r=".65"><stop offset="0" stop-color="#f0a050"/><stop offset=".55" stop-color="#d06828"/><stop offset="1" stop-color="#98200c"/></radialGradient></defs><path d="M1 0l2.600 3.200M14.200 0l-2.200 3.200M0 5.600l2.600 1M16 5.600l-2.400 1M0 14l3.200-2.600M16 14l-3.200-2.600" stroke="#1a1410" stroke-width="1.300" fill="none"/><ellipse cx="8.100" cy="8.200" rx="6" ry="6.900" fill="url(#bg)"/><path d="M3.100 4.400A6 6.900 0 0 1 13.100 4.400Q8.100 6 3.100 4.400z" fill="#3c2410"/><path d="M8.100 5.200v9.600" stroke="#f6cc98" stroke-width=".800"/><path d="M7.200 5.400q-.6 5 0 9.200M9 5.400q.6 5 0 9.200" stroke="#a83818" stroke-width=".600" fill="none"/></svg>
<div class="ui8" style="left:1371px;top:171px;color:#000;">General registers</div>
<svg style="left:1846px;top:173px" width="66" height="13" viewBox="0 0 66 13"><rect x=".75" y="1.5" width="11" height="10" fill="none" stroke="#333" stroke-width="1.2"/><rect x=".2" y=".5" width="12.1" height="3.200" fill="#333"/><rect x="32.300" y="1" width="6.400" height="6.400" fill="#c8c8c8" stroke="#444" stroke-width="1.300"/><rect x="31.700" y=".4" width="7.600" height="2" fill="#444"/><rect x="29.500" y="4.700" width="6.400" height="6.400" fill="#fff" stroke="#444" stroke-width="1.300"/><rect x="28.900" y="4.100" width="7.600" height="2.200" fill="#444"/><path d="M55.600 2l8.400 8.400M64 2l-8.400 8.400" stroke="#333" stroke-width="1.800" fill="none"/></svg>
<div style="left:1345px;top:193px;width:575px;height:1px;background:#c4c6cc;"></div>
<div style="left:1345px;top:195px;width:491px;height:50px;background:#f0f0f0;border:1px solid #82858e;box-sizing:border-box;"></div>
<div style="left:1346px;top:196px;width:468px;height:27px;background:#ccffff;"></div>
<div class="c9" style="left:1349px;top:199px;color:#0000ff;">RDI</div>
<div class="c9" style="left:1378px;top:199px;color:#000;">00000000000001B8</div>
<svg style="left:1532px;top:203px" width="11" height="10" viewBox="0 0 11 10"><path d="M1.5 0v5.5h6" fill="none" stroke="#7a7a7a" stroke-width="1.6"/><path d="M6.5 2l4 3.5-4 3.5z" fill="#7a7a7a"/></svg>
<div style="left:1367px;top:231px;width:395px;height:6px;background:#8a8a8a;"></div>
<div style="left:1814px;top:243px;width:21px;height:1px;background:#fff;"></div>
<div style="left:1840px;top:195px;width:80px;height:50px;background:#f0f0f0;border:1px solid #82858e;box-sizing:border-box;"></div>
<div style="left:1841px;top:196px;width:57px;height:48px;background:#ccffff;"></div>
<div class="c9" style="left:1843px;top:200px;color:#0000ff;">ID</div>
<div class="c9" style="left:1882px;top:200px;color:#000;">0</div>
<div class="c9" style="left:1843px;top:220px;color:#0000ff;">VIP</div>
<div class="c9" style="left:1882px;top:220px;color:#000;">0</div>
<div style="left:1841px;top:236px;width:57px;height:8px;overflow:hidden"><div class="c9" style="left:2px;top:4px;color:#0000ff">VIF</div><div class="c9" style="left:41px;top:4px;color:#000">0</div></div>
<div style="left:1906px;top:217px;width:6px;height:6px;background:#8a8a8a;"></div>
<div style="left:1345px;top:249px;width:575px;height:30px;background:#f0f0f0;border:1px solid #82858e;box-sizing:border-box;"></div>
<div style="left:1346px;top:277px;width:573px;height:1px;background:#ffffff;"></div>
<div style="left:1918px;top:250px;width:1px;height:28px;background:#ffffff;"></div>
<svg style="left:1349px;top:255px" width="16" height="16" viewBox="0 0 16 16"><rect x="1.500" y=".5" width="14" height="14" fill="#f4fbff" stroke="#3a78e8"/><rect x="1" y="0" width="15" height="2.600" fill="url(#at)"/><rect x=".5" y="6" width="6.500" height="9.500" fill="#dce8fb" stroke="#1c4a9a"/><path d="M2 9.500h3.400M2 11.500h3.400M2 13.500h3.400" stroke="#2a5fc0" stroke-width=".900"/><rect x="9" y="4.500" width="4.600" height="7.600" fill="#e4eefc" stroke="#1c4a9a"/><rect x="10.300" y="7.500" width="2" height="2.600" fill="#fff" stroke="#2a5fc0" stroke-width=".600"/></svg>
<div class="ui8" style="left:1371px;top:257px;color:#000;">Modules</div>
<svg style="left:1846px;top:259px" width="66" height="13" viewBox="0 0 66 13"><rect x=".75" y="1.5" width="11" height="10" fill="none" stroke="#333" stroke-width="1.2"/><rect x=".2" y=".5" width="12.1" height="3.200" fill="#333"/><rect x="32.300" y="1" width="6.400" height="6.400" fill="#c8c8c8" stroke="#444" stroke-width="1.300"/><rect x="31.700" y=".4" width="7.600" height="2" fill="#444"/><rect x="29.500" y="4.700" width="6.400" height="6.400" fill="#fff" stroke="#444" stroke-width="1.300"/><rect x="28.900" y="4.100" width="7.600" height="2.200" fill="#444"/><path d="M55.600 2l8.400 8.400M64 2l-8.400 8.400" stroke="#333" stroke-width="1.800" fill="none"/></svg>
<div style="left:1345px;top:281px;width:575px;height:87px;background:#f0f0f0;border:1px solid #82858e;box-sizing:border-box;"></div>
<div style="left:1346px;top:282px;width:553px;height:65px;background:#fff;"></div>
<div style="left:1760px;top:282px;width:1px;height:29px;background:#e4e4e4;"></div>
<div class="hdr" style="left:1351px;top:288.5px;color:#000;letter-spacing:-0.230px;">Path</div>
<div class="hdr" style="left:1766px;top:288.5px;color:#000;letter-spacing:-0.867px;">Base</div>
<svg style="left:1349px;top:311px" width="16" height="16" viewBox="0 0 16 16"><rect x="1.500" y=".5" width="14" height="14" fill="#f4fbff" stroke="#3a78e8"/><rect x="1" y="0" width="15" height="2.600" fill="url(#at)"/><rect x=".5" y="6" width="6.500" height="9.500" fill="#dce8fb" stroke="#1c4a9a"/><path d="M2 9.500h3.400M2 11.500h3.400M2 13.500h3.400" stroke="#2a5fc0" stroke-width=".900"/><rect x="9" y="4.500" width="4.600" height="7.600" fill="#e4eefc" stroke="#1c4a9a"/><rect x="10.300" y="7.500" width="2" height="2.600" fill="#fff" stroke="#2a5fc0" stroke-width=".600"/></svg>
<div class="ui8" style="left:1370px;top:313px;color:#000;">C:\Users\jht3\Downloads\chall.exe</div>
<div class="ui8" style="left:1764px;top:313px;color:#000;">00007FF798210000</div>
<svg style="left:1349px;top:328px" width="16" height="16" viewBox="0 0 16 16"><rect x="1.500" y=".5" width="14" height="14" fill="#f4fbff" stroke="#3a78e8"/><rect x="1" y="0" width="15" height="2.600" fill="url(#at)"/><rect x=".5" y="6" width="6.500" height="9.500" fill="#dce8fb" stroke="#1c4a9a"/><path d="M2 9.500h3.400M2 11.500h3.400M2 13.500h3.400" stroke="#2a5fc0" stroke-width=".900"/><rect x="9" y="4.500" width="4.600" height="7.600" fill="#e4eefc" stroke="#1c4a9a"/><rect x="10.300" y="7.500" width="2" height="2.600" fill="#fff" stroke="#2a5fc0" stroke-width=".600"/></svg>
<div class="ui8" style="left:1370px;top:330px;color:#000;">C:\ProgramData\A-Volute\A-Volute.Nahimic\Modul⋯</div>
<div class="ui8" style="left:1764px;top:330px;color:#000;">00007FFC3C820000</div>
<div style="left:1906px;top:303px;width:6px;height:22px;background:#868686;"></div>
<div style="left:1350px;top:345px;width:15px;height:1px;background:#48b8f0;"></div>
<div style="left:1367px;top:354px;width:294px;height:6px;background:#868686;"></div>
<div style="left:1345px;top:397px;width:575px;height:30px;background:#f0f0f0;border:1px solid #82858e;box-sizing:border-box;"></div>
<div style="left:1346px;top:425px;width:573px;height:1px;background:#ffffff;"></div>
<div style="left:1918px;top:398px;width:1px;height:28px;background:#ffffff;"></div>
<svg style="left:1349px;top:403px" width="16" height="16" viewBox="0 0 16 16"><rect x=".5" y=".5" width="15" height="15" fill="#f4fbff" stroke="#3a78e8"/><rect x="0" y="0" width="16" height="2.600" fill="url(#at)"/><rect x="3.500" y="4.500" width="5.500" height="5.500" fill="#e8f0fc" stroke="#1f3f8f"/><rect x="6.500" y="8" width="5.500" height="5.500" fill="#f8fbff" stroke="#1f3f8f"/></svg>
<div class="ui8" style="left:1371px;top:405px;color:#000;">Threads</div>
<svg style="left:1846px;top:407px" width="66" height="13" viewBox="0 0 66 13"><rect x=".75" y="1.5" width="11" height="10" fill="none" stroke="#333" stroke-width="1.2"/><rect x=".2" y=".5" width="12.1" height="3.200" fill="#333"/><rect x="32.300" y="1" width="6.400" height="6.400" fill="#c8c8c8" stroke="#444" stroke-width="1.300"/><rect x="31.700" y=".4" width="7.600" height="2" fill="#444"/><rect x="29.500" y="4.700" width="6.400" height="6.400" fill="#fff" stroke="#444" stroke-width="1.300"/><rect x="28.900" y="4.100" width="7.600" height="2.200" fill="#444"/><path d="M55.600 2l8.400 8.400M64 2l-8.400 8.400" stroke="#333" stroke-width="1.800" fill="none"/></svg>
<div style="left:1345px;top:429px;width:575px;height:87px;background:#f0f0f0;border:1px solid #82858e;box-sizing:border-box;"></div>
<div style="left:1346px;top:430px;width:553px;height:64px;background:#fff;"></div>
<div style="left:1420px;top:430px;width:1px;height:29px;background:#e4e4e4;"></div>
<div style="left:1475px;top:430px;width:1px;height:29px;background:#e4e4e4;"></div>
<div style="left:1580px;top:430px;width:1px;height:29px;background:#e4e4e4;"></div>
<div class="hdr" style="left:1351px;top:436.5px;color:#000;letter-spacing:0.029px;">Decimal</div>
<div class="hdr" style="left:1426px;top:436.5px;color:#000;letter-spacing:0.182px;">Hex</div>
<div class="hdr" style="left:1481px;top:436.5px;color:#000;letter-spacing:0.128px;">State</div>
<div class="hdr" style="left:1586px;top:436.5px;color:#000;letter-spacing:0.078px;">Name</div>
<svg style="left:1349px;top:459px" width="16" height="16" viewBox="0 0 16 16"><rect x=".5" y=".5" width="15" height="15" fill="#f4fbff" stroke="#3a78e8"/><rect x="0" y="0" width="16" height="2.600" fill="url(#at)"/><rect x="3.500" y="4.500" width="5.500" height="5.500" fill="#e8f0fc" stroke="#1f3f8f"/><rect x="6.500" y="8" width="5.500" height="5.500" fill="#f8fbff" stroke="#1f3f8f"/></svg>
<div class="ui8b" style="left:1371px;top:461px;color:#000;">3588</div>
<div class="ui8b" style="left:1424px;top:461px;color:#000;">E04</div>
<div class="ui8b" style="left:1479px;top:461px;color:#000;">Ready</div>
<div class="ui8b" style="left:1584px;top:461px;color:#000;">chall.exe</div>
<svg style="left:1349px;top:476px" width="16" height="16" viewBox="0 0 16 16"><rect x=".5" y=".5" width="15" height="15" fill="#f4fbff" stroke="#3a78e8"/><rect x="0" y="0" width="16" height="2.600" fill="url(#at)"/><rect x="3.500" y="4.500" width="5.500" height="5.500" fill="#e8f0fc" stroke="#1f3f8f"/><rect x="6.500" y="8" width="5.500" height="5.500" fill="#f8fbff" stroke="#1f3f8f"/></svg>
<div class="ui8" style="left:1371px;top:478px;color:#000;">28748</div>
<div class="ui8" style="left:1424px;top:478px;color:#000;">704C</div>
<div class="ui8" style="left:1479px;top:478px;color:#000;">Ready</div>
<div class="ui8" style="left:1584px;top:478px;color:#000;">7FFC8F185090</div>
<div style="left:1906px;top:452px;width:6px;height:22px;background:#868686;"></div>
<div style="left:1350px;top:493px;width:15px;height:1px;background:#48b8f0;"></div>
<div style="left:1367px;top:502px;width:491px;height:6px;background:#868686;"></div>
<div style="left:0px;top:520px;width:1187px;height:30px;background:#f0f0f0;border:1px solid #82858e;box-sizing:border-box;"></div>
<div style="left:1px;top:548px;width:1185px;height:1px;background:#ffffff;"></div>
<div style="left:1185px;top:521px;width:1px;height:28px;background:#ffffff;"></div>
<svg style="left:4px;top:526px" width="15" height="15" viewBox="0 0 15 15"><rect x=".5" y=".5" width="14" height="14" fill="#fff" stroke="#3f7fe8"/><rect x="0" y="0" width="15" height="2" fill="#4aa0f4"/><path d="M7.500 4.200l3.600 2.100v4.200l-3.600 2.100-3.600-2.100v-4.200z" fill="#e4ecff" stroke="#3a3af0" stroke-width="1.100"/></svg>
<div class="ui8" style="left:27px;top:528px;color:#000;">Hex View-1</div>
<svg style="left:1113px;top:530px" width="66" height="13" viewBox="0 0 66 13"><rect x=".75" y="1.5" width="11" height="10" fill="none" stroke="#333" stroke-width="1.2"/><rect x=".2" y=".5" width="12.1" height="3.200" fill="#333"/><rect x="32.300" y="1" width="6.400" height="6.400" fill="#c8c8c8" stroke="#444" stroke-width="1.300"/><rect x="31.700" y=".4" width="7.600" height="2" fill="#444"/><rect x="29.500" y="4.700" width="6.400" height="6.400" fill="#fff" stroke="#444" stroke-width="1.300"/><rect x="28.900" y="4.100" width="7.600" height="2.200" fill="#444"/><path d="M55.600 2l8.400 8.400M64 2l-8.400 8.400" stroke="#333" stroke-width="1.800" fill="none"/></svg>
<div style="left:1px;top:553px;width:1164px;height:229px;background:#ccffff;overflow:hidden">
<div class="c9" style="left:0px;top:2px;color:#808080">0000002D582FED20</div>
<div class="c9" style="left:162px;top:2px;color:#000080">70 00 00 00 6C 00 00 00  65 00 00 00 61 00 00 00</div>
<div class="c9" style="left:612px;top:2px;color:#0000ff">p...l...e...a...</div>
<div class="c9" style="left:0px;top:22px;color:#808080">0000002D582FED30</div>
<div class="c9" style="left:162px;top:22px;color:#000080">73 00 00 00 65 00 00 00  20 00 00 00 64 00 00 00</div>
<div class="c9" style="left:612px;top:22px;color:#0000ff">s...e...·...d...</div>
<div class="c9" style="left:0px;top:42px;color:#808080">0000002D582FED40</div>
<div class="c9" style="left:162px;top:42px;color:#000080">6F 00 00 00 20 00 00 00  6E 00 00 00 6F 00 00 00</div>
<div class="c9" style="left:612px;top:42px;color:#0000ff">o...·...n...o...</div>
<div class="c9" style="left:0px;top:62px;color:#808080">0000002D582FED50</div>
<div class="c9" style="left:162px;top:62px;color:#000080">74 00 00 00 20 00 00 00  74 00 00 00 72 00 00 00</div>
<div class="c9" style="left:612px;top:62px;color:#0000ff">t...·...t...r...</div>
<div class="c9" style="left:0px;top:82px;color:#808080">0000002D582FED60</div>
<div class="c9" style="left:162px;top:82px;color:#000080">79 00 00 00 20 00 00 00  74 00 00 00 6F 00 00 00</div>
<div class="c9" style="left:612px;top:82px;color:#0000ff">y...·...t...o...</div>
<div class="c9" style="left:0px;top:102px;color:#808080">0000002D582FED70</div>
<div class="c9" style="left:162px;top:102px;color:#000080">20 00 00 00 66 00 00 00  69 00 00 00 6E 00 00 00</div>
<div class="c9" style="left:612px;top:102px;color:#0000ff">·...f...i...n...</div>
<div class="c9" style="left:0px;top:122px;color:#808080">0000002D582FED80</div>
<div class="c9" style="left:162px;top:122px;color:#000080">64 00 00 00 20 00 00 00  68 00 00 00 65 00 00 00</div>
<div class="c9" style="left:612px;top:122px;color:#0000ff">d...·...h...e...</div>
<div class="c9" style="left:0px;top:142px;color:#808080">0000002D582FED90</div>
<div class="c9" style="left:162px;top:142px;color:#000080">72 00 00 00 20 00 00 00  73 00 00 00 68 00 00 00</div>
<div class="c9" style="left:612px;top:142px;color:#0000ff">r...·...s...h...</div>
<div class="c9" style="left:0px;top:162px;color:#808080">0000002D582FEDA0</div>
<div class="c9" style="left:162px;top:162px;color:#000080">65 00 00 00 20 00 00 00  64 00 00 00 6F 00 00 00</div>
<div class="c9" style="left:612px;top:162px;color:#0000ff">e...·...d...o...</div>
<div style="left:0;top:180px;width:1166px;height:20px;background:#b8e4e4"></div>
<div style="left:576px;top:180px;width:18px;height:20px;background:#000080"></div>
<div class="c9" style="left:0px;top:182px;color:#808080">0000002D582FEDB0</div>
<div class="c9" style="left:162px;top:182px;color:#000080">20 00 00 00 6E 00 00 00  6F 00 00 00 74 00 00 <span style="color:#fff">00</span></div>
<div class="c9" style="left:612px;top:182px;color:#0000ff">·...n...o...t...</div>
<div class="c9" style="left:0px;top:202px;color:#808080">0000002D582FEDC0</div>
<div class="c9" style="left:162px;top:202px;color:#000080">20 00 00 00 62 00 00 00  65 00 00 00 6C 00 00 00</div>
<div class="c9" style="left:612px;top:202px;color:#0000ff">·...b...e...l...</div>
<div class="c9" style="left:0px;top:222px;color:#808080">0000002D582FEDD0</div>
<div class="c9" style="left:162px;top:222px;color:#000080">65 00 00 00 65 00 00 00  67 00 00 00 20 00 00 00</div>
<div class="c9" style="left:612px;top:222px;color:#0000ff">e...e...g...·...</div>
</div>
<div style="left:1173px;top:574px;width:6px;height:22px;background:#8a8a8a;"></div>
<div style="left:0px;top:782px;width:1188px;height:17px;background:#f0f0f0;"></div>
<div style="left:0;top:782px;width:1188px;height:17px;overflow:hidden"><div class="st9" style="left:4px;top:5px;color:#000">UNKNOWN</div><div style="left:67px;top:3px;width:1px;height:16px;background:#c8c8c8"></div><div class="st9" style="left:73px;top:5px;color:#000">0000002D582FEDBF: Stack[00000E04]:0000002D582FEDBF</div><div style="left:524px;top:3px;width:1px;height:16px;background:#c8c8c8"></div><div style="left:539px;top:3px;width:1px;height:16px;background:#c8c8c8"></div></div>
<div style="left:1191px;top:520px;width:729px;height:30px;background:#f0f0f0;border:1px solid #82858e;box-sizing:border-box;"></div>
<div style="left:1192px;top:548px;width:727px;height:1px;background:#ffffff;"></div>
<div style="left:1918px;top:521px;width:1px;height:28px;background:#ffffff;"></div>
<svg style="left:1195px;top:526px" width="15" height="15" viewBox="0 0 15 15"><rect x=".5" y=".5" width="14" height="14" fill="#fff" stroke="#3f7fe8"/><rect x="0" y="0" width="15" height="2" fill="#4aa0f4"/><path d="M7.500 4.200l3.600 2.100v4.200l-3.600 2.100-3.600-2.100v-4.200z" fill="#e4ecff" stroke="#3a3af0" stroke-width="1.100"/></svg>
<div class="ui8" style="left:1218px;top:528px;color:#000;">Stack view</div>
<svg style="left:1846px;top:530px" width="66" height="13" viewBox="0 0 66 13"><rect x=".75" y="1.5" width="11" height="10" fill="none" stroke="#333" stroke-width="1.2"/><rect x=".2" y=".5" width="12.1" height="3.200" fill="#333"/><rect x="32.300" y="1" width="6.400" height="6.400" fill="#c8c8c8" stroke="#444" stroke-width="1.300"/><rect x="31.700" y=".4" width="7.600" height="2" fill="#444"/><rect x="29.500" y="4.700" width="6.400" height="6.400" fill="#fff" stroke="#444" stroke-width="1.300"/><rect x="28.900" y="4.100" width="7.600" height="2.200" fill="#444"/><path d="M55.600 2l8.400 8.400M64 2l-8.400 8.400" stroke="#333" stroke-width="1.800" fill="none"/></svg>
<div style="left:1192px;top:553px;width:706px;height:229px;background:#ccffff;overflow:hidden">
<div style="left:0;top:0px;width:706px;height:20px;background:#6ad4f0"></div>
<div class="c9" style="left:0px;top:2px;color:#0000ff">0000002D582FED00</div>
<div class="c9" style="left:162px;top:2px;color:#008000">0000000000000000</div>
<div class="c9" style="left:0px;top:22px;color:#808080">0000002D582FED08</div>
<div class="c9" style="left:162px;top:22px;color:#008000">0000002D582FED10</div>
<div class="c9" style="left:324px;top:22px;color:#808080">Stack[00000E04]:0000002D582FED10</div>
<div class="c9" style="left:0px;top:42px;color:#808080">0000002D582FED10</div>
<div class="c9" style="left:162px;top:42px;color:#008000">000089106684EC85</div>
<div class="c9" style="left:0px;top:62px;color:#808080">0000002D582FED18</div>
<div class="c9" style="left:162px;top:62px;color:#008000">00007FFC8F17AB1C</div>
<div class="c9" style="left:324px;top:62px;color:#808080">ntdll.dll:00007FFC8F17AB1C</div>
<div class="c9" style="left:0px;top:82px;color:#808080">0000002D582FED20</div>
<div class="c9" style="left:162px;top:82px;color:#008000">0000006C00000070</div>
<div class="c9" style="left:0px;top:102px;color:#808080">0000002D582FED28</div>
<div class="c9" style="left:162px;top:102px;color:#008000">0000006100000065</div>
<div class="c9" style="left:0px;top:122px;color:#808080">0000002D582FED30</div>
<div class="c9" style="left:162px;top:122px;color:#008000">0000006500000073</div>
<div class="c9" style="left:0px;top:142px;color:#808080">0000002D582FED38</div>
<div class="c9" style="left:162px;top:142px;color:#008000">0000006400000020</div>
<div class="c9" style="left:0px;top:162px;color:#808080">0000002D582FED40</div>
<div class="c9" style="left:162px;top:162px;color:#008000">000000200000006F</div>
<div class="c9" style="left:0px;top:182px;color:#808080">0000002D582FED48</div>
<div class="c9" style="left:162px;top:182px;color:#008000">0000006F0000006E</div>
<div class="c9" style="left:0px;top:202px;color:#808080">0000002D582FED50</div>
<div class="c9" style="left:162px;top:202px;color:#008000">0000002000000074</div>
<div class="c9" style="left:0px;top:222px;color:#808080">0000002D582FED58</div>
<div class="c9" style="left:162px;top:222px;color:#008000">0000007200000074</div>
</div>
<div style="left:1906px;top:574px;width:6px;height:22px;background:#8a8a8a;"></div>
<div style="left:1191px;top:782px;width:729px;height:17px;background:#f0f0f0;"></div>
<div style="left:1191px;top:782px;width:729px;height:17px;overflow:hidden"><div class="st9" style="left:3px;top:5px;color:#000">UNKNOWN</div><div style="left:67px;top:3px;width:1px;height:16px;background:#c8c8c8"></div><div style="left:72px;top:0;width:420px;height:17px;overflow:hidden"><div class="st9" style="left:0;top:5px;color:#000">0000002D582FED00: Stack[00000E04]:0000002D582FED00</div></div><div style="left:493px;top:3px;width:1px;height:16px;background:#c8c8c8"></div><div class="st9" style="left:499px;top:5px;color:#000">(Synchronized with RSP)</div></div>
</div></body></html>
